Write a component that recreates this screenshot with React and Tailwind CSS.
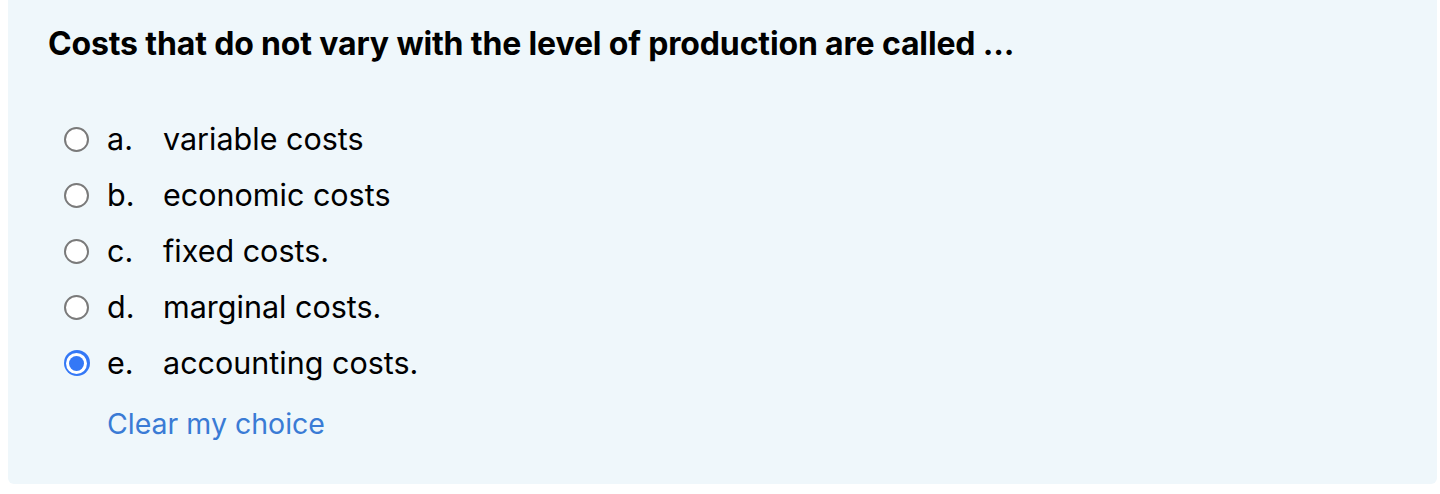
import React from "react";

const options = [
  { l: "a.", t: "variable costs" },
  { l: "b.", t: "economic costs" },
  { l: "c.", t: "fixed costs." },
  { l: "d.", t: "marginal costs." },
  { l: "e.", t: "accounting costs.", checked: true },
];

function Radio({ checked }) {
  if (checked) {
    return (
      <span className="flex h-[26px] w-[26px] shrink-0 items-center justify-center rounded-full bg-[#3478f6]">
        <span className="flex h-[21px] w-[21px] items-center justify-center rounded-full bg-white">
          <span className="h-[15px] w-[15px] rounded-full bg-[#3478f6]" />
        </span>
      </span>
    );
  }
  return (
    <span className="h-[25px] w-[25px] shrink-0 rounded-full border-2 border-[#7a7a7a] bg-white" />
  );
}

export default function App() {
  return (
    <div className="bg-white w-[1440px] h-[494px] font-['Inter',sans-serif] text-black">
      <div className="ml-[8px] mr-[3px] h-[484px] rounded-b-[6px] bg-[#eff7fb] pl-[40px] pt-[24px]">
        <h1 className="text-[32px] font-bold leading-[40px] tracking-[-0.15px]">
          Costs that do not vary with the level of production are called ...
        </h1>
        <div className="mt-[47px] flex flex-col pl-[16px]">
          {options.map((o) => (
            <div key={o.l} className="flex h-[56px] items-center">
              <span className="flex w-[25px] shrink-0 items-center justify-center">
                <Radio checked={o.checked} />
              </span>
              <span className="ml-[18px] w-[56px] text-[30.5px]">{o.l}</span>
              <span className="text-[30.5px]">{o.t}</span>
            </div>
          ))}
          <div className="ml-[43px] mt-[11px] text-[28.5px] leading-[44px] text-[#3a7bd5]">
            Clear my choice
          </div>
        </div>
      </div>
    </div>
  );
}
